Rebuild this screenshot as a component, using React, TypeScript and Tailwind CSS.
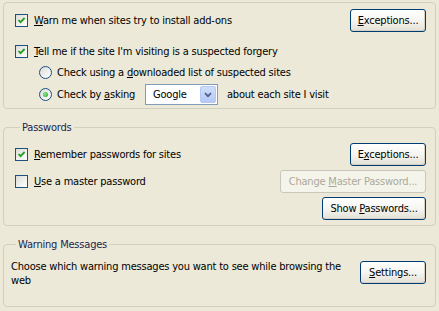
import React from 'react';

const FONT: React.CSSProperties = { fontFamily: '"DejaVu Sans Condensed", "DejaVu Sans", sans-serif', fontStretch: 'condensed' };

function Check({ checked }: { checked?: boolean }) {
  return (
    <span className="flex h-[13px] w-[13px] shrink-0 items-center justify-center border border-[#1C5180] bg-linear-to-br from-[#DCDCD7] to-white">
      {checked && (
        <svg width="9" height="9" viewBox="0 0 9 9">
          <path d="M1.5 4 L3.5 6.2 L7.6 2" fill="none" stroke="#21A121" strokeWidth="1.8" />
        </svg>
      )}
    </span>
  );
}

function Radio({ checked }: { checked?: boolean }) {
  return (
    <span className="flex h-[13px] w-[13px] shrink-0 items-center justify-center rounded-full border border-[#1C5180] bg-linear-to-br from-[#DCDCD7] to-white">
      {checked && <span className="h-[5px] w-[5px] rounded-full bg-[radial-gradient(circle_at_40%_40%,#8BEA87,#1F9E1F)]" />}
    </span>
  );
}

function Btn({ children, className = '', disabled }: { children: React.ReactNode; className?: string; disabled?: boolean }) {
  return (
    <button
      disabled={disabled}
      className={`flex h-[23px] shrink-0 items-center justify-center rounded-[3px] border text-[11px] tracking-[-0.2px] ${
        disabled
          ? 'border-[#C9C7BA] bg-[#F5F4EA] text-[#ACA899]'
          : 'border-[#003C74] bg-linear-to-b from-white via-[#F5F5F1] to-[#E3E0D5] text-black shadow-[inset_-1px_-1px_0_#D6D0C5]'
      } ${className}`}
    >
      {children}
    </button>
  );
}

function Legend({ children }: { children: React.ReactNode }) {
  return <legend className="ml-[5px] px-[2px] text-[11px] leading-[13px] text-[#1B2550]">{children}</legend>;
}

export default function App() {
  return (
    <div className="h-[311px] w-[439px] overflow-hidden bg-[#ECE9D8] px-[3px] pt-[2px] text-[11px] leading-[14px] tracking-[-0.2px] text-black" style={FONT}>
      {/* add-ons / forgery */}
      <div className="w-[433px] rounded-[4px] border border-[#D0D0BF] pb-[3px] pl-[11px] pr-[9px]">
        <div className="mt-[6px] flex h-[23px] items-center">
          <Check checked />
          <span className="ml-[6px] flex-1">
            <u>W</u>arn me when sites try to install add-ons
          </span>
          <Btn className="w-[76px]">
            <span><u>E</u>xceptions...</span>
          </Btn>
        </div>
        <div className="mt-[11px] flex h-[17px] items-center">
          <Check checked />
          <span className="ml-[6px]">
            <u>T</u>ell me if the site I'm visiting is a suspected forgery
          </span>
        </div>
        <div className="ml-[24px] mt-[4px] flex h-[17px] items-center">
          <Radio />
          <span className="ml-[5px]">
            Check using a <u>d</u>ownloaded list of suspected sites
          </span>
        </div>
        <div className="ml-[24px] mt-[3px] flex h-[21px] items-center">
          <Radio checked />
          <span className="ml-[5px] w-[88px]">
            Check by <u>a</u>sking
          </span>
          <div className="flex h-[21px] w-[73px] items-center border border-[#7F9DB9] bg-white p-[1px]">
            <span className="flex-1 pl-[6px]">Google</span>
            <span className="flex h-full w-[16px] items-center justify-center rounded-[2px] border border-[#B6C8F4] bg-linear-to-b from-[#D0DEFC] to-[#B4C8F6]">
              <svg width="8" height="6" viewBox="0 0 8 6">
                <path d="M1 1.2 L4 4.2 L7 1.2" fill="none" stroke="#4D6185" strokeWidth="1.7" />
              </svg>
            </span>
          </div>
          <span className="ml-[9px]">about each site I visit</span>
        </div>
      </div>

      {/* Passwords */}
      <fieldset className="mt-[12px] w-[433px] rounded-[4px] border border-[#D0D0BF] pb-[5px] pl-[11px] pr-[9px]">
        <Legend>Passwords</Legend>
        <div className="mt-[9px] flex h-[23px] items-center">
          <Check checked />
          <span className="ml-[6px] flex-1">
            <u>R</u>emember passwords for sites
          </span>
          <Btn className="w-[76px]">
            <span>E<u>x</u>ceptions...</span>
          </Btn>
        </div>
        <div className="mt-[4px] flex h-[23px] items-center">
          <Check />
          <span className="ml-[6px] flex-1">
            <u>U</u>se a master password
          </span>
          <Btn disabled className="w-[146px]">
            <span>Change <u>M</u>aster Password...</span>
          </Btn>
        </div>
        <div className="mt-[4px] flex h-[23px] items-center justify-end">
          <Btn className="w-[104px]">
            <span>Show <u>P</u>asswords...</span>
          </Btn>
        </div>
      </fieldset>

      {/* Warning Messages */}
      <fieldset className="mt-[12px] w-[433px] rounded-[4px] border border-[#D0D0BF] pb-[18px] pl-[7px] pr-[9px]">
        <Legend>Warning Messages</Legend>
        <div className="mt-[9px] flex items-start">
          <p className="w-[342px]">Choose which warning messages you want to see while browsing the web</p>
          <Btn className="ml-auto mt-[1px] w-[66px]">
            <span><u>S</u>ettings...</span>
          </Btn>
        </div>
      </fieldset>
    </div>
  );
}
